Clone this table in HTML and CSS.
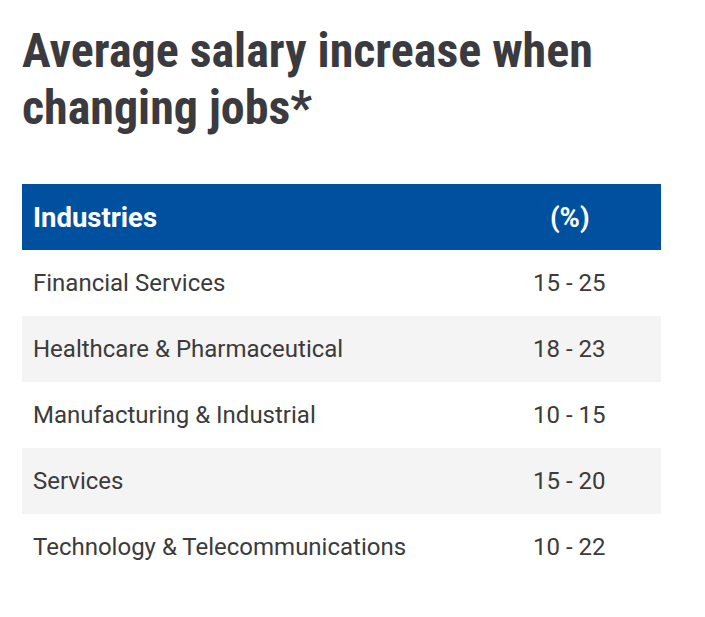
FILE: index.html
```html
<!DOCTYPE html>
<html lang="en">
<head>
    <meta charset="UTF-8">
    <meta name="viewport" content="width=device-width, initial-scale=1.0">
    <title>Salary increase</title>
    <link rel="stylesheet" href="styles.css">
</head>
<body>
    <div class="wrap">
        <h2 class="title">Average salary increase when changing jobs*</h2>

        <table class="salary">
            <thead>
                <tr>
                    <th>Industries</th>
                    <th class="pct">(%)</th>
                </tr>
            </thead>
            <tbody>
                <tr><td>Financial Services</td><td class="pct">15 - 25</td></tr>
                <tr><td>Healthcare &amp; Pharmaceutical</td><td class="pct">18 - 23</td></tr>
                <tr><td>Manufacturing &amp; Industrial</td><td class="pct">10 - 15</td></tr>
                <tr><td>Services</td><td class="pct">15 - 20</td></tr>
                <tr><td>Technology &amp; Telecommunications</td><td class="pct">10 - 22</td></tr>
            </tbody>
        </table>
    </div>
</body>
</html>
```

FILE: styles.css
```css
body {
    margin: 0;
    background: #fff;
    font-family: Roboto, "Liberation Sans", sans-serif;
    color: #3b3b3f;
}

.wrap {
    padding: 22px 44px 0 22px;
}

.title {
    margin: 0 0 48px;
    width: 600px;
    font-size: 48px;
    line-height: 57px;
    font-weight: 700;
    font-stretch: condensed;
    color: #3b3b3f;
}

.salary {
    width: 639px;
    border-collapse: collapse;
}

.salary th,
.salary td {
    text-align: left;
    padding: 0 11px;
    height: 66px;
}

.salary th {
    background: #0050a0;
    color: #fff;
    font-size: 27.5px;
    font-weight: 700;
    height: 66px;
}

.salary td {
    font-size: 24px;
    font-weight: 400;
    color: #3b3b3b;
}

.salary tbody tr:nth-child(even) td {
    background: #f4f4f4;
}

.salary .pct {
    width: 117px;
}

.salary th.pct {
    padding-left: 28px;
    width: 100px;
}
```
